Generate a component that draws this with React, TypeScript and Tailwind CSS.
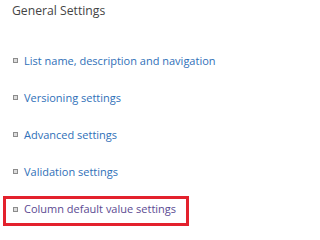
import React from "react";

const links = [
  "List name, description and navigation",
  "Versioning settings",
  "Advanced settings",
  "Validation settings",
];

function Bullet() {
  return <span className="w-[5px] h-[5px] border border-[#8c8c8c] bg-[#dcdcdc] shrink-0" />;
}

export default function App() {
  return (
    <div className="w-[224px] h-[228px] bg-white overflow-hidden font-['Open_Sans','Noto_Sans',sans-serif]">
      <div className="h-[42px] pl-[12px] pt-[1px] text-[12.2px] leading-[20px] text-[#444444]">General Settings</div>
      {links.map((t) => (
        <div key={t} className="h-[37px] flex items-center pl-[13px] gap-[6px]">
          <Bullet />
          <span className="text-[11px] leading-[18px] text-[#2f70b8] whitespace-nowrap">{t}</span>
        </div>
      ))}
      <div className="h-[37px] pt-[6px]">
        <div className="ml-[3px] w-[186px] h-[30px] border-[3px] border-[#e3212d] flex items-start pt-[1px] pl-[7px]">
          <div className="h-[18px] flex items-center gap-[6px]">
            <Bullet />
            <span className="text-[11px] leading-[18px] text-[#5b4a92] whitespace-nowrap">Column default value settings</span>
          </div>
        </div>
      </div>
    </div>
  );
}
